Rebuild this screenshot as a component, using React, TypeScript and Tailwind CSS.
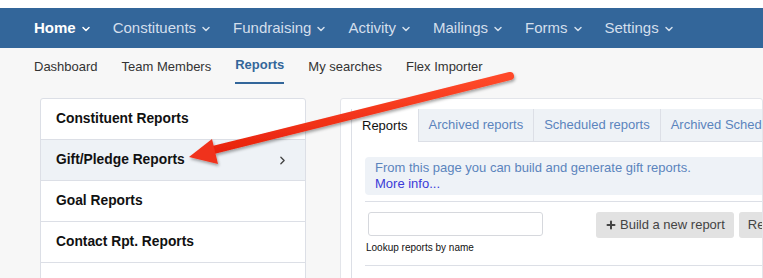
import { ChevronDown, ChevronRight, Plus } from "lucide-react"

const mainNav = ["Home", "Constituents", "Fundraising", "Activity", "Mailings", "Forms", "Settings"]
const subNav = ["Dashboard", "Team Members", "Reports", "My searches", "Flex Importer"]
const reportTypes = ["Constituent Reports", "Gift/Pledge Reports", "Goal Reports", "Contact Rpt. Reports", ""]
const tabs = ["Reports", "Archived reports", "Scheduled reports", "Archived Scheduled reports"]

const App = () => {
  return (
    <div className="relative w-[763px] h-[278px] overflow-hidden bg-[#f7f7f7] font-['Liberation_Sans',Arial,sans-serif]">
      <div className="h-2 bg-white" />
      <nav className="h-10 bg-[#33669a] flex items-center pl-[34px] gap-[21px] whitespace-nowrap">
        {mainNav.map((item, i) => (
          <span
            key={item}
            className={`flex items-center gap-[4px] text-[15px] ${i === 0 ? "text-white font-bold" : "text-[#d3dfec]"}`}
          >
            {item}
            <ChevronDown size={12} strokeWidth={3} className="mt-[2px]" />
          </span>
        ))}
      </nav>

      <div className="flex pl-[34px] gap-[24px] h-[36px] items-end text-[13px] text-[#333]">
        {subNav.map((item) => (
          <span
            key={item}
            className={`pb-[8px] ${item === "Reports" ? "font-bold text-[#33669a] border-b-2 border-[#33669a] pb-[6px]" : ""}`}
          >
            {item}
          </span>
        ))}
      </div>

      <div className="flex mt-[14px] pl-[40px] gap-[34px]">
        <div className="w-[266px] shrink-0 bg-white border border-[#dcdfe6] rounded-[3px] h-[200px] overflow-hidden">
          {reportTypes.map((r) => (
            <div
              key={r}
              className={`h-[41px] flex items-center justify-between pl-[15px] pr-[16px] text-[13.8px] font-bold text-[#111] border-b border-[#dcdfe6] ${r === "Gift/Pledge Reports" ? "bg-[#eef2f6]" : ""}`}
            >
              {r}
              {r === "Gift/Pledge Reports" && <ChevronRight size={13} strokeWidth={2.5} className="text-[#444]" />}
            </div>
          ))}
        </div>

        <div className="flex-1 bg-white border border-[#e3e5ea] rounded-[3px] h-[200px] pl-[10px] pt-[10px] overflow-hidden">
          <div className="border-l border-t border-[#dcdfe6] h-full">
            <div className="flex h-[33px] whitespace-nowrap text-[13px] -mt-px">
              {tabs.map((t, i) => (
                <div
                  key={t}
                  className={`flex items-center px-[10px] border-r border-[#dcdfe6] ${i === 0 ? "bg-white text-[#111]" : "bg-[#eef2f6] text-[#5b84bd] border-b"}`}
                >
                  {t}
                </div>
              ))}
            </div>
            <div className="pl-[13px] pt-[15px]">
              <div className="bg-[#eef2f7] rounded-l-[4px] pl-[10px] py-[3px] text-[13px] leading-[16px] text-[#5b84bd] whitespace-nowrap">
                From this page you can build and generate gift reports.
                <div className="text-[#3b3bd8]">More info...</div>
              </div>
              <div className="border-t border-[#dcdfe6] mt-[6px]" />
              <div className="flex items-start pt-[10px] whitespace-nowrap">
                <div className="pl-[3px]">
                  <input className="w-[175px] h-[24px] border border-[#d6d8dd] rounded-[3px] bg-white" />
                  <div className="text-[10px] text-[#111] mt-[4px] -ml-[2px]">Lookup reports by name</div>
                </div>
                <div className="flex gap-[5px] ml-[53px]">
                  <button className="h-[26px] px-[9px] bg-[#e2e2e2] rounded-[3px] text-[13px] text-[#444] flex items-center gap-[3px]">
                    <Plus size={12} strokeWidth={4} className="text-[#444]" />
                    Build a new report
                  </button>
                  <button className="h-[26px] px-[9px] bg-[#e2e2e2] rounded-[3px] text-[13px] text-[#444]">
                    Reorder reports
                  </button>
                </div>
              </div>
              <div className="border-t border-[#dcdfe6] mt-[10px]" />
            </div>
          </div>
        </div>
      </div>

      <svg className="absolute left-0 top-0 pointer-events-none" width="763" height="278">
        <defs>
          <filter id="sh" x="-10%" y="-10%" width="120%" height="130%">
            <feDropShadow dx="1" dy="2" stdDeviation="1.5" floodColor="#000" floodOpacity="0.35" />
          </filter>
          <linearGradient id="rg" x1="0" y1="0" x2="0" y2="1">
            <stop offset="0" stopColor="#ff4a2a" />
            <stop offset="1" stopColor="#e8220c" />
          </linearGradient>
        </defs>
        <g filter="url(#sh)">
          <line x1="510" y1="76" x2="205" y2="152" stroke="url(#rg)" strokeWidth="8" strokeLinecap="round" />
          <polygon points="189,157 212,139 218,164" fill="#f0321a" />
        </g>
      </svg>
    </div>
  )
}

export default App
